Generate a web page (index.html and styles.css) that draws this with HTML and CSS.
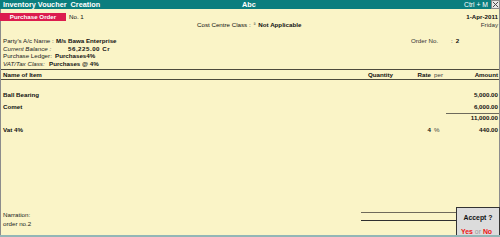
FILE: index.html
```html
<!DOCTYPE html>
<html>
<head>
<meta charset="utf-8">
<link rel="stylesheet" href="styles.css">
</head>
<body>
<div class="screen">
  <div class="titlebar">
    <div class="t-left">Inventory Voucher&nbsp;&nbsp;Creation</div>
    <div class="t-mid">Abc</div>
    <div class="t-right"><span class="shortcut">Ctrl + M</span><span class="close"><svg width="8" height="8" viewBox="0 0 8 8"><path d="M1 1L7 7M7 1L1 7" stroke="#444" stroke-width="1.1"/></svg></span></div>
  </div>
  <div class="main">
    <div class="row1">
      <div class="vtype">Purchase Order</div>
      <div class="vno">No. 1</div>
      <div class="date b">1-Apr-2011</div>
    </div>
    <div class="row2">
      <div class="cc">Cost Centre Class :<span class="mark">ª</span><span class="b">Not Applicable</span></div>
      <div class="day">Friday</div>
    </div>
    <div class="party">
      <div class="plist">
        <div class="pline"><span class="lbl w-pa">Party's A/c Name :</span><span class="b">M/s Bawa Enterprise</span></div>
        <div class="pline"><span class="lbl i w-cb">Current Balance :</span><span class="b num">56,225.00 Cr</span></div>
        <div class="pline"><span class="lbl w-pl">Purchase Ledger:</span><span class="b">Purchases4%</span></div>
        <div class="pline"><span class="lbl i w-vt">VAT/Tax Class:</span><span class="b">Purchases @ 4%</span></div>
      </div>
      <div class="order"><span class="olbl">Order No.</span><span class="ocolon">:</span><span class="b">2</span></div>
    </div>
    <div class="thead grid">
      <div class="b">Name of Item</div>
      <div class="b r">Quantity</div>
      <div class="b r">Rate</div>
      <div class="per">per</div>
      <div class="b r">Amount</div>
    </div>
    <div class="item grid first">
      <div class="b">Ball Bearing</div><div></div><div></div><div></div><div class="b r">5,000.00</div>
    </div>
    <div class="item grid gap4">
      <div class="b">Comet</div><div></div><div></div><div></div><div class="b r">6,000.00</div>
    </div>
    <div class="item grid total">
      <div></div><div></div><div></div><div></div><div class="b r sum">11,000.00</div>
    </div>
    <div class="item grid gap5">
      <div class="b">Vat 4%</div><div></div><div class="b r">4</div><div class="per">%</div><div class="b r">440.00</div>
    </div>
    <div class="spacer"></div>
    <div class="footer">
      <div class="narr">
        <div>Narration:</div>
        <div>order no.2</div>
      </div>
      <div class="lines"></div>
      <div class="accept">
        <div class="aq">Accept ?</div>
        <div class="yn"><span class="red">Yes</span> <span class="or">or</span> <span class="red">No</span></div>
      </div>
    </div>
  </div>
  <div class="bottom"></div>
</div>
</body>
</html>
```

FILE: styles.css
```css
html, body {
  margin: 0;
  padding: 0;
}
body {
  font-family: "Liberation Sans", Arial, sans-serif;
  font-size: 6.2px;
  color: #111;
  background: #faf4c7;
}
.screen {
  width: 500px;
  height: 237px;
  display: flex;
  flex-direction: column;
  overflow: hidden;
}
.b { font-weight: bold; }
.i { font-style: italic; }
.r { text-align: right; }

.titlebar {
  height: 9px;
  background: #0b7e7e;
  color: #fff;
  display: grid;
  grid-template-columns: 1fr auto 1fr;
  align-items: center;
  font-weight: bold;
  font-size: 7.3px;
  line-height: 9px;
}
.t-left { padding-left: 3px; }
.t-mid { font-weight: bold; padding-right: 2px; }
.t-right {
  display: flex;
  justify-content: flex-end;
  align-items: center;
  height: 9px;
}
.shortcut { font-weight: normal; font-size: 6.8px; margin-right: 3px; }
.close {
  width: 9px;
  height: 9px;
  box-sizing: border-box;
  background: #e8e8e8;
  border: 1px solid #8a8a8a;
  display: flex;
  align-items: center;
  justify-content: center;
}
.close svg { width: 7px; height: 7px; }

.main {
  flex: 1;
  display: flex;
  flex-direction: column;
  border-left: 1px solid #8c8c8c;
  border-right: 1px solid #8c8c8c;
  background: #faf4c7;
}
.row1 {
  margin-top: 4px;
  height: 8px;
  line-height: 8px;
  display: flex;
  align-items: center;
}
.vtype {
  width: 66px;
  height: 8px;
  margin-left: -1px;
  background: #dc1c4e;
  color: #fff;
  font-weight: bold;
  text-align: center;
}
.vno { margin-left: 3px; }
.date { margin-left: auto; padding-right: 1px; }
.row2 {
  height: 8px;
  line-height: 8px;
  display: flex;
}
.cc { margin-left: 196px; }
.mark { font-size: 4.5px; margin: 0 3px 0 3px; vertical-align: 1px; }
.day { margin-left: auto; padding-right: 1px; color: #333; }

.party {
  margin-top: 8px;
  display: flex;
  padding-left: 2px;
}
.plist { width: 408px; }
.pline { line-height: 7.7px; height: 7.7px; }
.lbl { color: #222; display: inline-block; }
.w-pa { width: 53px; }
.w-cb { width: 65px; }
.w-pl { width: 52px; }
.w-vt { width: 46px; }
.num { letter-spacing: 0.5px; }
.order { line-height: 7.7px; height: 7.7px; }
.olbl { color: #333; display: inline-block; width: 40px; }
.ocolon { margin-right: 3px; }

.grid {
  display: grid;
  grid-template-columns: 1fr 52px 38px 15px 52px;
  padding-left: 2px;
  padding-right: 1px;
}
.per { padding-left: 3px; color: #444; }
.thead {
  margin-top: 1px;
  border-top: 1px solid #4d4a3c;
  border-bottom: 1px solid #4d4a3c;
  height: 9px;
  line-height: 9px;
}
.item {
  height: 8px;
  line-height: 8px;
}
.first { margin-top: 11px; }
.gap4 { margin-top: 4px; }
.total { margin-top: 2px; height: 9px; }
.total .sum { border-top: 1px solid #6d6a5c; margin-right: -1px; padding-right: 1px; height: 8px; }
.gap5 { margin-top: 4px; }

.spacer { flex: 1; }
.footer {
  display: flex;
  align-items: flex-end;
}
.narr {
  flex: 1;
  padding-left: 2px;
  line-height: 8.5px;
  margin-bottom: 7px;
  color: #222;
}
.lines {
  width: 95px;
  height: 7px;
  border-top: 1px solid #6f6a5a;
  border-bottom: 1px solid #2f2f2f;
  margin-bottom: 14px;
}
.accept {
  width: 44px;
  height: 28px;
  box-sizing: border-box;
  background: #dcdcdc;
  border: 1px solid #333;
  border-bottom: none;
  margin-right: -1px;
  text-align: center;
  font-weight: bold;
}
.aq { margin-top: 6px; font-size: 6.9px; line-height: 8px; color: #111; }
.yn { margin-top: 6px; font-size: 6.9px; line-height: 8px; text-align: left; padding-left: 4px; }
.red { color: #ee1111; }
.or { color: #999; font-weight: normal; }

.bottom {
  height: 2px;
  background: #93b6b6;
}
```
